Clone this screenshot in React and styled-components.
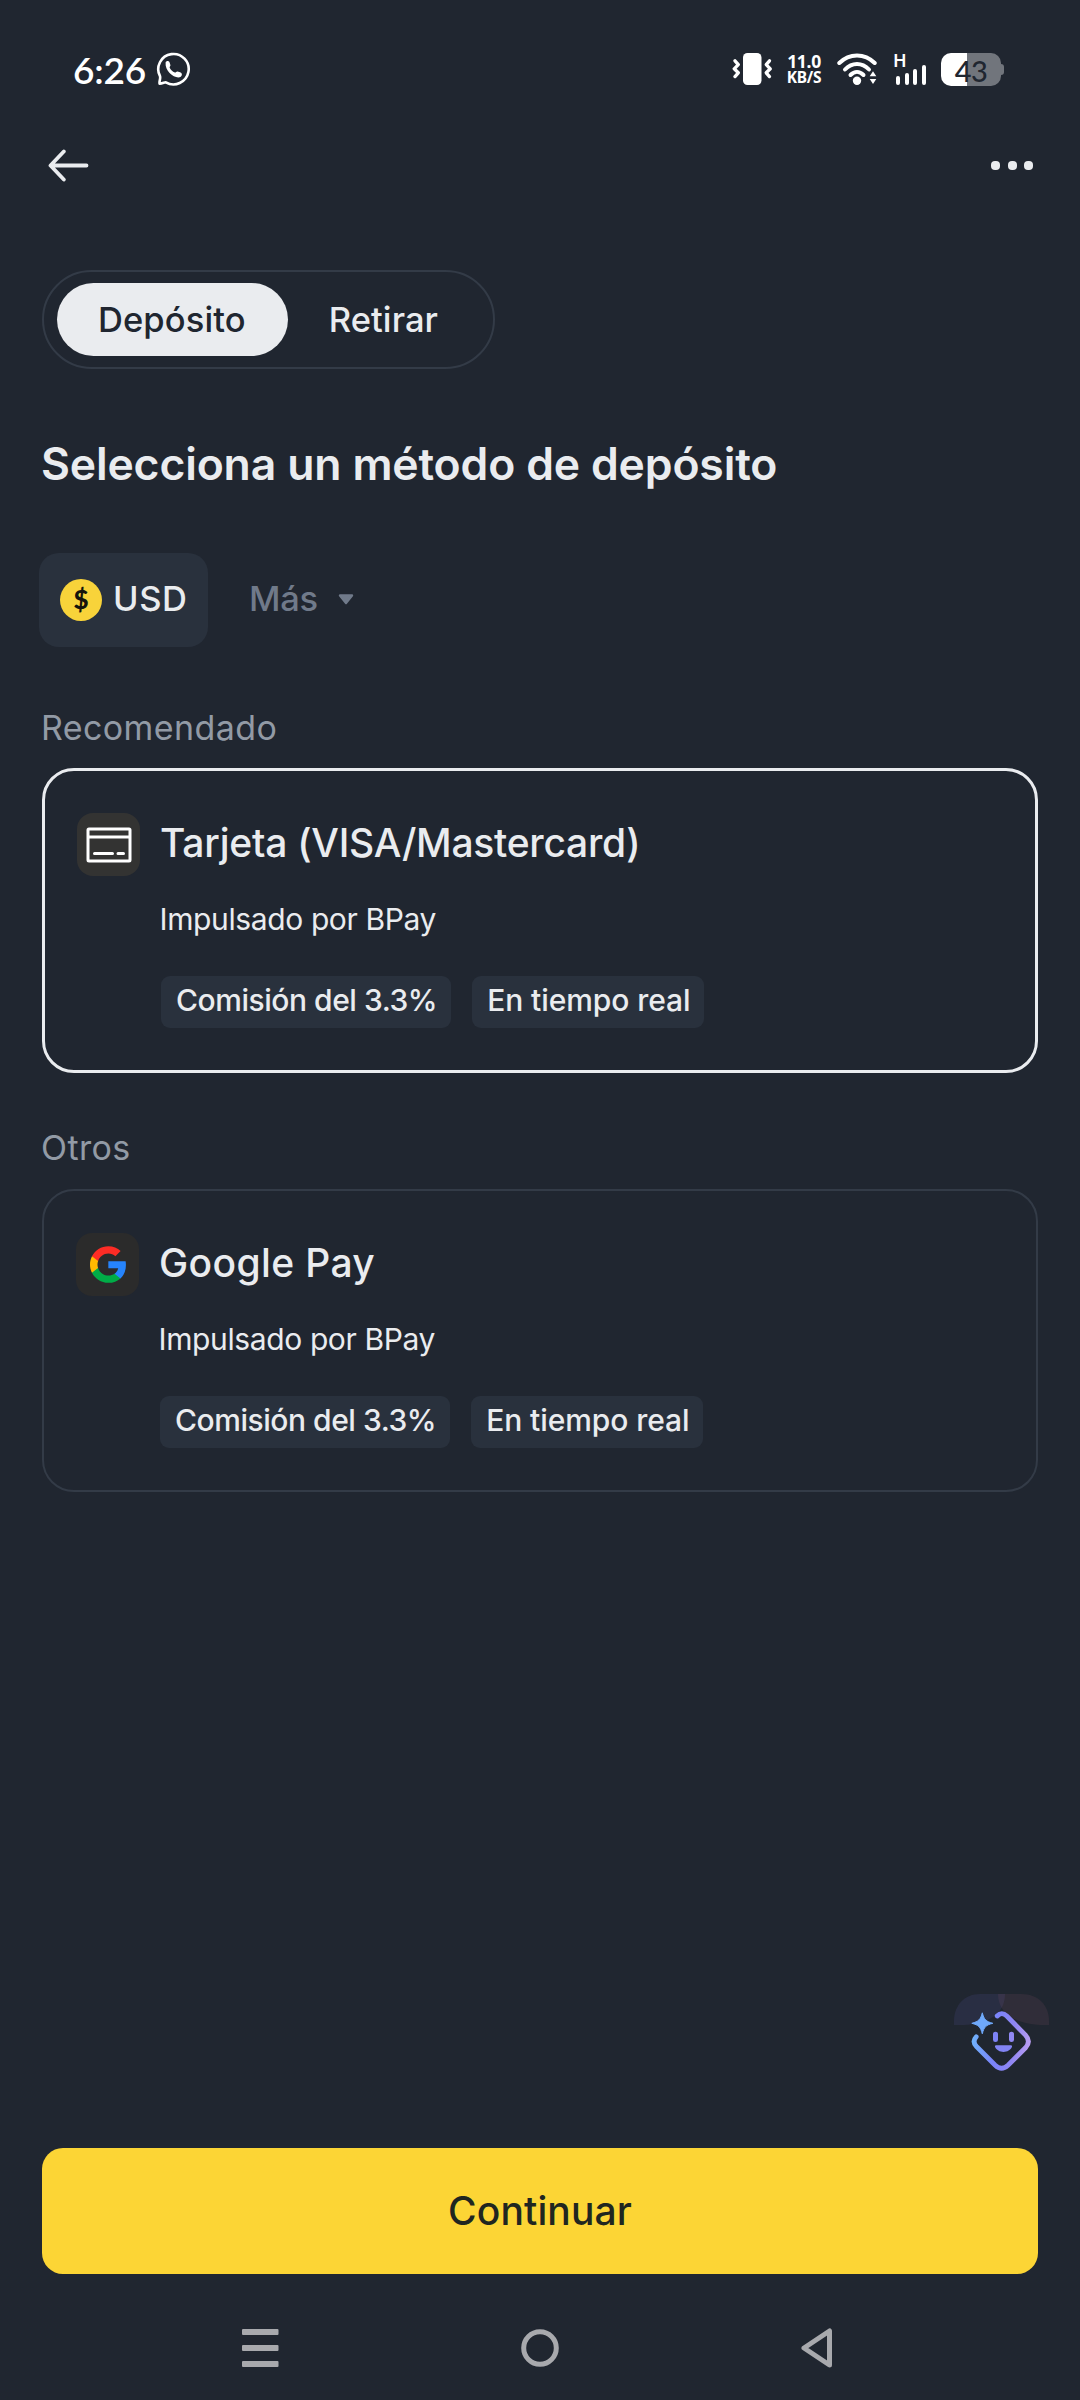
import React, { useState } from "react"
import styled, { createGlobalStyle } from "styled-components"

const colors = {
  background: "#202630",
  surface: "#29313d",
  line: "#333b47",
  text: "#eaecef",
  textSecondary: "#929aa5",
  textTertiary: "#707a8a",
  yellow: "#fcd535",
  nav: "#a8a9ad",
}

const GlobalStyle = createGlobalStyle`
  body {
    margin: 0;
    background: ${colors.background};
  }
  * {
    box-sizing: border-box;
  }
  button {
    border: none;
    background: none;
    padding: 0;
    margin: 0;
    font: inherit;
    color: inherit;
    cursor: pointer;
  }
  svg {
    display: block;
  }
`

const Screen = styled.div`
  position: relative;
  display: flex;
  flex-direction: column;
  width: 1080px;
  height: 2400px;
  color: ${colors.text};
  font-family: Inter, "Liberation Sans", sans-serif;
`

// status bar
const StatusBar = styled.div`
  display: flex;
  align-items: center;
  height: 138px;
  padding: 0 76px 0 73px;
  color: #fff;
`
const Time = styled.span`
  font-family: Lato, sans-serif;
  font-size: 37px;
  font-weight: 600;
  line-height: 42px;
  letter-spacing: -0.2px;
  margin-right: 10px;
  padding-top: 1px;
`
const StatusIcons = styled.div`
  display: flex;
  align-items: center;
  margin-left: auto;
`
const Speed = styled.div`
  display: flex;
  flex-direction: column;
  align-items: center;
  width: 38px;
  margin: 0 14px 0 12px;
  font-family: "Noto Sans", sans-serif;
  font-weight: 700;
  font-size: 17.5px;
  line-height: 16px;
  letter-spacing: -0.3px;
`
const SpeedUnit = styled.span`
  font-size: 15.5px;
`
const Signal = styled.div`
  width: 34px;
  height: 32px;
  margin: 0 14px 0 15px;
`
const Network = styled.div`
  font-family: "Noto Sans", sans-serif;
  font-weight: 600;
  font-size: 18px;
  line-height: 14px;
  height: 14px;
`
const Bars = styled.div`
  display: flex;
  align-items: flex-end;
  gap: 4.3px;
  height: 18px;
  padding-left: 3px;
`
const Bar = styled.div`
  width: 4.3px;
  flex: none;
  border-radius: 2px;
  background: #fff;
  height: ${(p) => p.$height}px;
  margin-top: -4px;
`
const BatteryWrap = styled.div`
  display: flex;
  align-items: center;
`
const Battery = styled.div`
  width: 60px;
  height: 33px;
  border-radius: 10px;
  background: linear-gradient(to right, #fff 26px, #71757c 26px);
  color: ${colors.background};
  font-family: Lato, sans-serif;
  font-size: 29px;
  font-weight: 500;
  line-height: 35px;
  letter-spacing: -0.5px;
  text-align: center;
`
const BatteryTip = styled.div`
  width: 3px;
  height: 11px;
  border-radius: 0 3px 3px 0;
  background: #71757c;
`

// header
const Header = styled.div`
  display: flex;
  align-items: center;
  justify-content: space-between;
  height: 55px;
  padding: 0 47px 0 48px;
`
const MoreButton = styled.button`
  display: flex;
  gap: 7.5px;
`
const Dot = styled.i`
  width: 9px;
  height: 9px;
  border-radius: 4px;
  background: ${colors.text};
`

const Content = styled.div`
  flex: 1;
  padding: 0 42px;
`
const Tabs = styled.div`
  display: flex;
  align-items: center;
  width: 453px;
  height: 99px;
  margin-top: 77px;
  padding-left: 13px;
  border: 2px solid ${colors.line};
  border-radius: 50px;
`
const Tab = styled.button`
  height: 73px;
  padding: 0 42px 1px 41px;
  border-radius: 37px;
  font-size: 34.5px;
  font-weight: 500;
  letter-spacing: 0.1px;
  background: ${(p) => (p.$active ? colors.text : "transparent")};
  color: ${(p) => (p.$active ? colors.background : colors.text)};
`
const Title = styled.h1`
  margin: 67px 0 0 -1px;
  font-size: 44.5px;
  font-weight: 600;
  line-height: 56px;
  letter-spacing: -0.15px;
`
const Currencies = styled.div`
  display: flex;
  align-items: center;
  margin: 61px 0 0 -3px;
  font-size: 34.5px;
  font-weight: 500;
`
const CurrencyChip = styled.div`
  display: flex;
  align-items: center;
  gap: 11px;
  width: 169px;
  height: 94px;
  padding-left: 21px;
  border-radius: 20px;
  background: ${colors.surface};
  letter-spacing: 0.6px;
`
const Coin = styled.div`
  width: 42px;
  height: 42px;
  border-radius: 50%;
  background: #f8d33a;
  color: #14140c;
  font-family: Lato, sans-serif;
  font-size: 26px;
  font-weight: 900;
  line-height: 41px;
  letter-spacing: 0;
  text-align: center;
`
const Label = styled.span`
  line-height: 40px;
  padding-bottom: 2px;
`
const MoreCurrencies = styled.button`
  display: flex;
  align-items: center;
  gap: 20px;
  margin-left: 41px;
  letter-spacing: -0.3px;
  color: ${colors.textTertiary};
`

const SectionLabel = styled.div`
  margin: ${(p) => p.$top}px 0 ${(p) => p.$bottom}px -1px;
  font-size: 34px;
  line-height: 42px;
  letter-spacing: 0.4px;
  color: ${colors.textSecondary};
`
const Card = styled.div`
  display: flex;
  align-items: flex-start;
  gap: 21px;
  height: ${(p) => (p.$selected ? 305 : 303)}px;
  padding: 42px 32px;
  border: ${(p) => (p.$selected ? `3px solid ${colors.text}` : `2px solid ${colors.line}`)};
  border-radius: 32px;
`
const CardIcon = styled.div`
  display: flex;
  align-items: center;
  justify-content: center;
  flex: none;
  width: 63px;
  height: 63px;
  border-radius: 16px;
  background: ${(p) => p.$background};
`
const CardTitle = styled.div`
  margin: 4px 0 0 -1px;
  font-size: 39px;
  font-weight: 500;
  line-height: 52px;
  letter-spacing: ${(p) => p.$spacing}px;
`
const Provider = styled.div`
  margin: 30px 0 37px -1.5px;
  font-size: 30px;
  line-height: 40px;
  letter-spacing: -0.38px;
`
const Tags = styled.div`
  display: flex;
  gap: 21px;
`
const Tag = styled.span`
  height: 52px;
  padding: 0 14px 0 15px;
  border-radius: 9px;
  background: ${colors.surface};
  font-size: 30px;
  font-weight: 500;
  line-height: 48px;
  letter-spacing: ${(p) => p.$spacing}px;
`

const Assistant = styled.button`
  position: absolute;
  right: 20px;
  bottom: 320px;
`
const ContinueButton = styled.button`
  flex: none;
  height: 126px;
  margin: 0 42px;
  padding-bottom: 2px;
  border-radius: 21px;
  background: ${colors.yellow};
  color: #202620;
  font-size: 39px;
  font-weight: 500;
  letter-spacing: 0.1px;
`
const SystemNav = styled.div`
  flex: none;
  display: flex;
  align-items: center;
  justify-content: space-between;
  height: 126px;
  padding: 22px 247px 0 242px;
`

const WhatsAppIcon = () => (
  <svg width="36" height="36" viewBox="0 0 36 36" fill="none">
    <path
      d="M4 25.2 A15.2 15.2 0 1 1 9.8 31.3 C8.5 31.2 6.5 32.5 3.6 32.6 C3 30 4.8 27.6 4 25.2Z"
      stroke="#fff"
      strokeWidth="2.6"
      strokeLinejoin="round"
    />
    <path
      d="M9.6 11.6c.6-2 3.4-2 4 0l.8 2.4c.3 1-.9 1.7-.8 2.5 1.1 2.4 2.8 4.1 5.3 5.1.9.2 1.5-1.2 2.6-1l2.6.7c2.2.7 2.4 3.1.7 4.4-4.6 3.2-16.2-4.6-15.2-14.1z"
      fill="#fff"
    />
  </svg>
)

const VibrateIcon = () => (
  <svg width="41" height="34" viewBox="0 0 41 34" fill="none">
    <rect x="11" y="1" width="18.5" height="32" rx="4.5" fill="#fff" />
    <g stroke="#fff" strokeWidth="3.3" strokeLinecap="round" strokeLinejoin="round">
      <path d="M3 8.8 6.3 12.6 2.2 16.8 6.3 20.8 3 24.6" />
      <path d="M37.5 8.8 34.2 12.6 38.3 16.8 34.2 20.8 37.5 24.6" />
    </g>
  </svg>
)

const WifiIcon = () => (
  <svg width="41" height="32" viewBox="0 0 41 32" fill="none">
    <g stroke="#fff" strokeWidth="4" strokeLinecap="round">
      <path d="M2.3 10C12.5 0 27.5 0 37.7 10" />
      <path d="M8 16.5C15 9 25 9 32 16.5" />
      <path d="M13.5 22C17.5 18 22.5 18 26.5 22" />
    </g>
    <circle cx="20" cy="27.7" r="4.2" fill="#fff" />
    <path d="M36 18.3 39.3 23.3H32.7zM36 31 39.3 26H32.7z" fill="#fff" />
  </svg>
)

const BackIcon = () => (
  <svg width="41" height="33" viewBox="0 0 41 33" fill="none">
    <path
      d="M15.8 2.5 2.5 16.5 15.8 30.5M3 16.5H38.5"
      stroke={colors.text}
      strokeWidth="3.8"
      strokeLinecap="round"
      strokeLinejoin="round"
    />
  </svg>
)

const CaretIcon = () => (
  <svg width="16" height="12" viewBox="0 0 16 12">
    <path
      d="M2 1.5H14L8 9z"
      fill={colors.textTertiary}
      stroke={colors.textTertiary}
      strokeWidth="2.4"
      strokeLinejoin="round"
    />
  </svg>
)

const CreditCardIcon = () => (
  <svg width="46" height="36" viewBox="0 0 46 36" fill="none" stroke="#fff" strokeWidth="3">
    <rect x="2" y="2" width="42" height="32" rx="1" />
    <path d="M2 10H44" />
    <path d="M8.5 26.5H26.5M32 26.5H37.5" strokeLinecap="round" />
  </svg>
)

const GoogleIcon = () => (
  <svg width="36" height="37" viewBox="1 1 21.6 22">
    <path
      fill="#2684fc"
      d="M22.56 12.25c0-.78-.07-1.53-.2-2.25H12v4.26h5.92c-.26 1.37-1.04 2.53-2.21 3.31v2.77h3.57c2.08-1.92 3.28-4.74 3.28-8.09z"
    />
    <path
      fill="#00ac47"
      d="M12 23c2.97 0 5.46-.98 7.28-2.66l-3.57-2.77c-.98.66-2.23 1.06-3.71 1.06-2.86 0-5.29-1.93-6.16-4.53H2.18v2.84C3.99 20.53 7.7 23 12 23z"
    />
    <path
      fill="#ffba00"
      d="M5.84 14.09c-.22-.66-.35-1.36-.35-2.09s.13-1.43.35-2.09V7.07H2.18C1.43 8.55 1 10.22 1 12s.43 3.45 1.18 4.93l2.85-2.22.81-.62z"
    />
    <path
      fill="#fd2c25"
      d="M12 5.38c1.62 0 3.06.56 4.21 1.64l3.15-3.15C17.45 2.09 14.97 1 12 1 7.7 1 3.99 3.47 2.18 7.07l3.66 2.84c.87-2.6 3.3-4.53 6.16-4.53z"
    />
  </svg>
)

const AssistantIcon = () => (
  <svg width="115" height="95" viewBox="0 0 115 95" fill="none">
    <defs>
      <linearGradient id="face" gradientUnits="userSpaceOnUse" x1="27" y1="50" x2="86" y2="56">
        <stop offset="0" stopColor="#6fb4fb" />
        <stop offset="0.4" stopColor="#7b83fa" />
        <stop offset="0.7" stopColor="#8f86f3" />
        <stop offset="1" stopColor="#bb9df2" />
      </linearGradient>
    </defs>
    <path d="M60 9H35C20 9 9 20 9 36V40C38 41 60 32 60 9z" fill="#7068c8" fillOpacity="0.13" />
    <path d="M53 9H76C93 9 104 20 104 36V40C77 41 53 32 53 9z" fill="#c07088" fillOpacity="0.1" />
    <path
      d="M52.2 31Q56.7 26.2 61.8 31L80.5 50.2Q86.3 56.5 80.5 62.8L63 80.2Q56.5 86.2 50.2 80.2L31.5 61.5Q26.8 56.5 31.2 51.8"
      stroke="url(#face)"
      strokeWidth="4.8"
      strokeLinecap="round"
    />
    <rect x="48" y="46.7" width="5" height="10.4" rx="2.4" fill="#7d83f6" />
    <rect x="64" y="46.7" width="5" height="10.4" rx="2.4" fill="#9088f3" />
    <path d="M51 60.3H66Q67.5 60.3 67 61.8C64.5 68.6 52.5 68.6 50 61.8Q49.5 60.3 51 60.3z" fill="#8284f4" />
    <path
      d="M37.3 27.8C39 34.5 41 36.5 47.8 38.3 41 40 39 42 37.3 48.8 35.6 42 33.6 40 26.8 38.3 33.6 36.5 35.6 34.5 37.3 27.8z"
      fill="#6fa9fb"
      stroke="#6fa9fb"
      strokeLinejoin="round"
    />
  </svg>
)

const RecentsIcon = () => (
  <svg width="37" height="38" viewBox="0 0 37 38" fill={colors.nav}>
    <rect y="0" width="36.5" height="6" rx="1" />
    <rect y="16" width="36.5" height="6" rx="1" />
    <rect y="32" width="36.5" height="6" rx="1" />
  </svg>
)

const HomeIcon = () => (
  <svg width="38" height="38" viewBox="0 0 38 38" fill="none">
    <circle cx="19" cy="19" r="16.3" stroke={colors.nav} strokeWidth="5" />
  </svg>
)

const NavBackIcon = () => (
  <svg width="32" height="40" viewBox="0 0 32 40" fill="none">
    <path d="M28.5 3V37L3 20z" stroke={colors.nav} strokeWidth="5" strokeLinejoin="round" />
  </svg>
)

const Method = ({ title, spacing, selected, icon, iconBackground }) => (
  <Card $selected={selected}>
    <CardIcon $background={iconBackground}>{icon}</CardIcon>
    <div>
      <CardTitle $spacing={spacing}>{title}</CardTitle>
      <Provider>Impulsado por BPay</Provider>
      <Tags>
        <Tag $spacing={-0.46}>Comisión del 3.3%</Tag>
        <Tag $spacing={-0.08}>En tiempo real</Tag>
      </Tags>
    </div>
  </Card>
)

const App = () => {
  const [tab, setTab] = useState("Depósito")

  return (
    <Screen>
      <GlobalStyle />
      <StatusBar>
        <Time>6:26</Time>
        <WhatsAppIcon />
        <StatusIcons>
          <VibrateIcon />
          <Speed>
            <span>11.0</span>
            <SpeedUnit>KB/S</SpeedUnit>
          </Speed>
          <WifiIcon />
          <Signal>
            <Network>H</Network>
            <Bars>
              {[9, 12, 16, 20].map((height) => (
                <Bar key={height} $height={height} />
              ))}
            </Bars>
          </Signal>
          <BatteryWrap>
            <Battery>43</Battery>
            <BatteryTip />
          </BatteryWrap>
        </StatusIcons>
      </StatusBar>

      <Header>
        <button>
          <BackIcon />
        </button>
        <MoreButton>
          <Dot />
          <Dot />
          <Dot />
        </MoreButton>
      </Header>

      <Content>
        <Tabs>
          {["Depósito", "Retirar"].map((name) => (
            <Tab key={name} $active={tab === name} onClick={() => setTab(name)}>
              {name}
            </Tab>
          ))}
        </Tabs>
        <Title>Selecciona un método de depósito</Title>
        <Currencies>
          <CurrencyChip>
            <Coin>$</Coin>
            <Label>USD</Label>
          </CurrencyChip>
          <MoreCurrencies>
            <Label>Más</Label>
            <CaretIcon />
          </MoreCurrencies>
        </Currencies>

        <SectionLabel $top={60} $bottom={19}>
          Recomendado
        </SectionLabel>
        <Method
          selected
          title="Tarjeta (VISA/Mastercard)"
          spacing={-0.25}
          icon={<CreditCardIcon />}
          iconBackground="#333332"
        />
        <SectionLabel $top={54} $bottom={20}>
          Otros
        </SectionLabel>
        <Method title="Google Pay" spacing={0.38} icon={<GoogleIcon />} iconBackground="#2b2b2b" />
      </Content>

      <Assistant>
        <AssistantIcon />
      </Assistant>
      <ContinueButton>Continuar</ContinueButton>
      <SystemNav>
        <RecentsIcon />
        <HomeIcon />
        <NavBackIcon />
      </SystemNav>
    </Screen>
  )
}

export default App
